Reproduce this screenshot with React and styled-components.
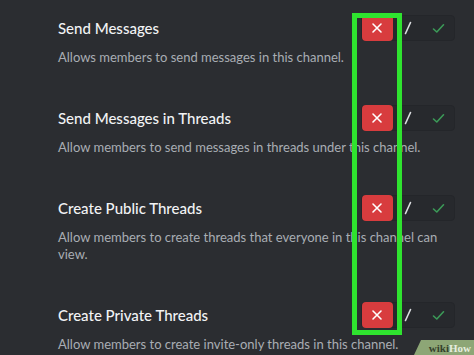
import styled, { createGlobalStyle } from 'styled-components';

const GlobalStyle = createGlobalStyle`
  html, body {
    margin: 0;
    padding: 0;
    background: #2b2d31;
  }
  body {
    font-family: Lato, "Noto Sans", sans-serif;
  }
`;

const Page = styled.div`
  position: relative;
  width: 474px;
  height: 355px;
  overflow: hidden;
  background: #2b2d31;
  box-sizing: border-box;
  padding: 15px 19px 0 58px;
`;

const Row = styled.div`
  margin-bottom: 39px;
`;

const Header = styled.div`
  display: flex;
  align-items: center;
  justify-content: space-between;
  height: 26px;
`;

const Title = styled.div`
  color: #f2f3f5;
  font-size: 15px;
  font-weight: 500;
`;

const Description = styled.div`
  margin-top: 8px;
  max-width: 385px;
  color: #a9adb4;
  font-size: 13px;
  line-height: 17px;
`;

const Toggle = styled.div`
  display: flex;
  align-items: center;
  width: 94px;
  height: 26px;
  box-sizing: border-box;
  border: 1px solid #24262a;
  border-radius: 4px;
  background: #27292d;
`;

const Segment = styled.div`
  display: flex;
  align-items: center;
  justify-content: center;
  width: 31px;
  height: 26px;
  margin: -1px 0;
  border-radius: 4px;
  background: ${p => (p.$active ? '#d83c3e' : 'transparent')};
`;

const Highlight = styled.div`
  position: absolute;
  left: 352px;
  top: 13px;
  width: 50px;
  height: 322px;
  box-sizing: border-box;
  border: 5px solid #2fe32f;
`;

const Badge = styled.div`
  position: absolute;
  right: 0;
  bottom: 0;
  width: 60px;
  height: 15px;
  background: #8da676;
  clip-path: polygon(7px 0, 100% 0, 100% 100%, 0 100%);
  display: flex;
  align-items: center;
  justify-content: flex-end;
  padding-right: 3px;
  box-sizing: border-box;
  font-family: "Liberation Serif", serif;
  font-weight: bold;
  font-size: 11px;
`;

const Wiki = styled.span`
  color: #34402c;
`;

const How = styled.span`
  color: #e6eddf;
`;

const XIcon = () => (
  <svg width="12" height="12" viewBox="0 0 12 12">
    <path d="M2 2 L10 10 M10 2 L2 10" stroke="#fff" strokeWidth="1.6" strokeLinecap="round" />
  </svg>
);

const SlashIcon = () => (
  <svg width="10" height="14" viewBox="0 0 10 14">
    <path d="M7.5 1.5 L2.5 12.5" stroke="#dcdee2" strokeWidth="1.6" strokeLinecap="round" />
  </svg>
);

const CheckIcon = () => (
  <svg width="13" height="11" viewBox="0 0 13 11">
    <path d="M1.5 6 L4.8 9 L11.5 1.8" fill="none" stroke="#3c9a58" strokeWidth="1.6" strokeLinecap="round" strokeLinejoin="round" />
  </svg>
);

const permissions = [
  { title: 'Send Messages', text: 'Allows members to send messages in this channel.' },
  { title: 'Send Messages in Threads', text: 'Allow members to send messages in threads under this channel.' },
  { title: 'Create Public Threads', text: 'Allow members to create threads that everyone in this channel can view.' },
  { title: 'Create Private Threads', text: 'Allow members to create invite-only threads in this channel.' },
];

export default function App() {
  return (
    <>
      <GlobalStyle />
      <Page>
        {permissions.map(p => (
          <Row key={p.title}>
            <Header>
              <Title>{p.title}</Title>
              <Toggle>
                <Segment $active><XIcon /></Segment>
                <Segment><SlashIcon /></Segment>
                <Segment><CheckIcon /></Segment>
              </Toggle>
            </Header>
            <Description>{p.text}</Description>
          </Row>
        ))}
        <Highlight />
        <Badge><Wiki>wiki</Wiki><How>How</How></Badge>
      </Page>
    </>
  );
}
